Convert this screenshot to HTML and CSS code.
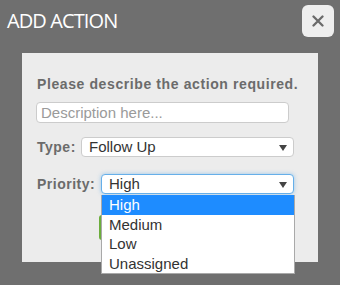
FILE: index.html
```html
<!DOCTYPE html>
<html>
<head>
<meta charset="utf-8">
<link rel="stylesheet" href="styles.css">
</head>
<body>
<div class="header">
  <h1 class="title">ADD ACTION</h1>
  <button class="close" aria-label="Close">
    <svg width="12" height="12" viewBox="0 0 12 12"><path d="M1.5 1.5 L10.5 10.5 M10.5 1.5 L1.5 10.5" stroke="#6a6a6a" stroke-width="2.3" stroke-linecap="round"/></svg>
  </button>
</div>
<div class="panel">
  <div class="prompt">Please describe the action required.</div>
  <div class="input">Description here...</div>
  <div class="row type-row">
    <span class="label">Type:</span>
    <div class="select type-select"><span>Follow Up</span><span class="arrow"></span></div>
  </div>
  <div class="row priority-row">
    <span class="label">Priority:</span>
    <div class="select-wrap">
      <div class="select focused"><span>High</span><span class="arrow"></span></div>
      <div class="save"></div>
      <ul class="options">
        <li class="selected">High</li>
        <li>Medium</li>
        <li>Low</li>
        <li>Unassigned</li>
      </ul>
    </div>
  </div>
</div>
</body>
</html>
```
FILE: styles.css
```css
html, body {
  margin: 0;
  padding: 0;
  background: #6f6f6f;
  width: 340px;
  height: 285px;
  overflow: hidden;
  font-family: "Liberation Sans", Arial, sans-serif;
}
.header {
  display: flex;
  justify-content: space-between;
  align-items: flex-start;
  height: 53px;
  padding: 0 6px 0 7px;
  box-sizing: border-box;
}
.title {
  margin: 8px 0 0 0;
  font-family: "Open Sans", sans-serif;
  font-weight: 400;
  font-size: 20px;
  letter-spacing: -0.9px;
  color: #ffffff;
  line-height: 26px;
}
.close {
  margin-top: 5px;
  width: 32px;
  height: 32px;
  border: none;
  border-radius: 6px;
  background: #eeeeee;
  display: flex;
  align-items: center;
  justify-content: center;
  padding: 0;
}
.close svg { display: block; }
.panel {
  margin-left: 22px;
  width: 296px;
  height: 209px;
  background: #ececec;
  box-sizing: border-box;
  padding: 24px 0 0 15px;
}
.prompt {
  font-weight: bold;
  font-size: 14px;
  line-height: 15px;
  color: #6b6b6b;
  letter-spacing: 0.6px;
  white-space: nowrap;
}
.input {
  margin: 10px 0 0 -1px;
  width: 253px;
  height: 21px;
  box-sizing: border-box;
  border: 1px solid #cccccc;
  border-radius: 4px;
  background: #fff;
  color: #9a9a9a;
  font-size: 15px;
  line-height: 19px;
  padding-left: 4px;
}
.row {
  display: flex;
  align-items: center;
}
.type-row { margin-top: 14px; }
.priority-row { margin-top: 17px; align-items: flex-start; }
.label {
  font-weight: bold;
  font-size: 14px;
  color: #6b6b6b;
  letter-spacing: 0.5px;
}
.type-row .label { width: 44px; }
.priority-row .label { width: 64px; line-height: 20px; }
.select {
  position: relative;
  height: 20px;
  box-sizing: border-box;
  border: 1px solid #cccccc;
  border-radius: 4px;
  background: #fff;
  color: #333;
  font-size: 15px;
  line-height: 18px;
  padding-left: 7px;
}
.type-select { width: 213px; }
.select-wrap {
  position: relative;
  width: 193px;
}
.focused {
  border-color: #66afe9;
  box-shadow: 0 0 4px rgba(102, 175, 233, 0.6);
}
.arrow {
  position: absolute;
  right: 6px;
  top: 7px;
  width: 0;
  height: 0;
  border-left: 4px solid transparent;
  border-right: 4px solid transparent;
  border-top: 6px solid #444;
}
.save {
  margin: 21px 0 0 -2px;
  width: 80px;
  height: 25px;
  background: #6cad3c;
  border-radius: 3px;
}
.options {
  position: absolute;
  left: 0;
  top: 21px;
  width: 194px;
  margin: 0;
  padding: 0;
  list-style: none;
  background: #fff;
  border: 1px solid #a9a9a9;
  border-top: none;
  box-sizing: border-box;
}
.options li {
  height: 19.5px;
  line-height: 19.5px;
  font-size: 15px;
  color: #333;
  padding-left: 7px;
}
.options li.selected {
  background: #1e8cff;
  color: #fff;
}
```
